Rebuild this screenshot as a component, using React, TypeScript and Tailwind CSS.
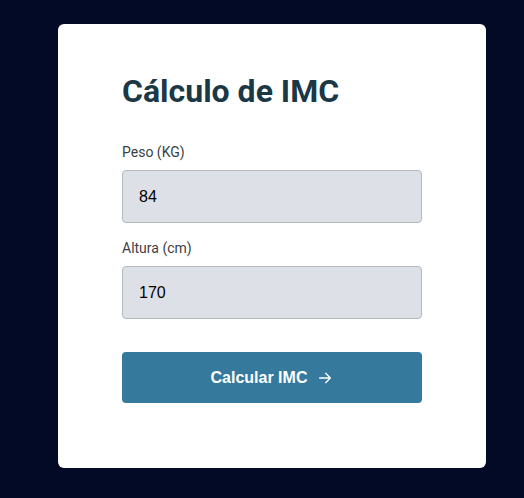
import { useState } from "react";

export default function App() {
  const [peso, setPeso] = useState("84");
  const [altura, setAltura] = useState("170");

  return (
    <div className="min-h-screen w-full bg-[#030a25] pt-[24px] pl-[58px]">
      <div className="w-[428px] h-[444px] bg-white rounded-[6px] px-16 pt-[48px]">
        <h1 className="font-['Roboto',sans-serif] text-[32px] leading-[38px] font-bold text-[#1b3846]">
          Cálculo de IMC
        </h1>

        <form className="mt-[32px] flex flex-col" onSubmit={(e) => e.preventDefault()}>
          <label className="font-['Roboto',sans-serif] text-[14px] leading-[20px] text-[#3a3f44] mb-[8px]">
            Peso (KG)
          </label>
          <input
            value={peso}
            onChange={(e) => setPeso(e.target.value)}
            className="font-['Liberation_Sans',Arial,sans-serif] h-[53px] w-full rounded-[4px] border border-[#b6b9be] bg-[#dde1e7] px-4 text-[16px] text-black outline-none"
          />

          <label className="font-['Roboto',sans-serif] mt-[15px] text-[14px] leading-[20px] text-[#3a3f44] mb-[8px]">
            Altura (cm)
          </label>
          <input
            value={altura}
            onChange={(e) => setAltura(e.target.value)}
            className="font-['Liberation_Sans',Arial,sans-serif] h-[53px] w-full rounded-[4px] border border-[#b6b9be] bg-[#dde1e7] px-4 text-[16px] text-black outline-none"
          />

          <button
            type="submit"
            className="font-['Liberation_Sans',Arial,sans-serif] mt-[33px] h-[51px] w-full rounded-[4px] bg-[#35799d] text-white text-[16px] font-bold flex items-center justify-center gap-[10px]"
          >
            Calcular IMC
            <svg
              className="w-[16px] h-[16px]"
              fill="none"
              viewBox="0 0 24 24"
              stroke="currentColor"
              strokeWidth={2}
            >
              <path strokeLinecap="round" strokeLinejoin="round" d="M4 12h16m0 0l-7-7m7 7l-7 7" />
            </svg>
          </button>
        </form>
      </div>
    </div>
  );
}
